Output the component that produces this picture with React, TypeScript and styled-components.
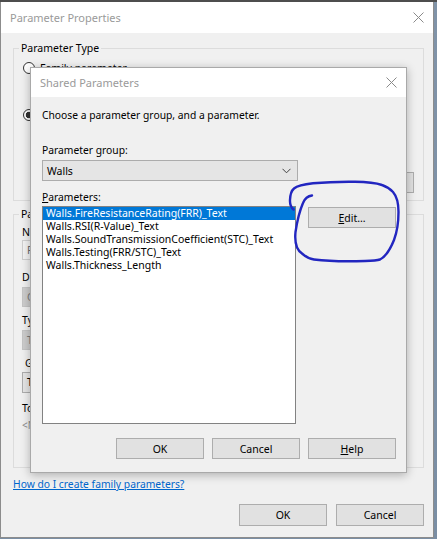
import React from 'react'
import styled, { createGlobalStyle } from 'styled-components'

const GlobalStyle = createGlobalStyle`
  html, body {
    margin: 0;
    padding: 0;
  }
  body {
    font-family: 'Noto Sans', 'Open Sans', sans-serif;
    font-size: 10px;
    color: #000;
  }
`

const parameters = [
  'Walls.FireResistanceRating(FRR)_Text',
  'Walls.RSI(R-Value)_Text',
  'Walls.SoundTransmissionCoefficient(STC)_Text',
  'Walls.Testing(FRR/STC)_Text',
  'Walls.Thickness_Length',
]

const CloseIcon: React.FC<{ size?: number }> = ({ size = 11 }) => (
  <svg width={size} height={size} viewBox="0 0 11 11">
    <path d="M0.5 0.5 L10.5 10.5 M10.5 0.5 L0.5 10.5" stroke="#8a8a8a" strokeWidth="1" fill="none" />
  </svg>
)

const Chevron = () => (
  <svg width="9" height="6" viewBox="0 0 9 6">
    <path d="M0.5 0.8 L4.5 4.8 L8.5 0.8" stroke="#404040" strokeWidth="1" fill="none" />
  </svg>
)

const App: React.FC = () => {
  return (
    <Desktop>
      <GlobalStyle />
      <Window>
        <TitleBar $h={31}>
          <TitleText>Parameter Properties</TitleText>
          <CloseIcon />
        </TitleBar>
        <WindowBody>
          <GroupBox>
            <Legend>Parameter Type</Legend>
            <GroupContent $h={145} $pl={4}>
              <RadioRow $mt={5}>
                <Radio />
                <span>Family parameter</span>
              </RadioRow>
              <RadioRow $mt={31}>
                <Radio $checked />
                <span>Shared parameter</span>
              </RadioRow>
              <ButtonRow $mt={49} $gap={8}>
                <Button $w={88} $h={21}>Select...</Button>
                <Button $w={88} $h={21}>Export...</Button>
              </ButtonRow>
            </GroupContent>
          </GroupBox>

          <GroupBox $mt={6}>
            <Legend>Parameter Data</Legend>
            <GroupContent $h={246} $pl={3}>
              <FieldLabel $mt={4}>Name:</FieldLabel>
              <TextBox $mt={1}>Fire Rating</TextBox>
              <FieldLabel $mt={10}>Discipline:</FieldLabel>
              <Combo $mt={3} $disabled>Common</Combo>
              <FieldLabel $mt={6}>Type of parameter:</FieldLabel>
              <Combo $mt={3} $disabled>Text</Combo>
              <FieldLabel $mt={6} $indent={3}>Group parameter under:</FieldLabel>
              <Combo $mt={2} $h={21}>Text</Combo>
              <FieldLabel $mt={8}>Tooltip description:</FieldLabel>
              <TooltipText>&lt;No tooltip description. Edit this parameter to write a custom tooltip.&gt;</TooltipText>
            </GroupContent>
          </GroupBox>

          <HelpLink href="#">How do I create family parameters?</HelpLink>

          <ButtonRow $mt={13} $gap={9}>
            <Button $w={88} $h={22}>OK</Button>
            <Button $w={88} $h={22}>Cancel</Button>
          </ButtonRow>
        </WindowBody>
      </Window>

      <Dialog>
        <TitleBar $h={29}>
          <TitleText>Shared Parameters</TitleText>
          <CloseIcon />
        </TitleBar>
        <DialogBody>
          <Text>Choose a parameter group, and a parameter.</Text>
          <Text $mt={21}>Parameter group:</Text>
          <GroupSelect>
            <span>Walls</span>
            <Chevron />
          </GroupSelect>
          <Text $mt={9}>
            <u>P</u>arameters:
          </Text>
          <ListRow>
            <ListBox>
              {parameters.map((name, i) => (
                <ListItem key={name} $selected={i === 0}>
                  {name}
                </ListItem>
              ))}
            </ListBox>
            <Button $w={88} $h={21} $mt={1}>
              <u>E</u>dit...
            </Button>
          </ListRow>
          <ButtonRow $mt={14} $gap={8}>
            <Button $w={88} $h={21}>OK</Button>
            <Button $w={88} $h={21}>Cancel</Button>
            <Button $w={88} $h={21}>
              <u>H</u>elp
            </Button>
          </ButtonRow>
        </DialogBody>
      </Dialog>

      <Annotation width="125" height="92" viewBox="280 175 125 92">
        <path
          d="M312 195.5 C308 196 305 198 303 203 C300 210 297 222 295.5 232 C294.5 242 297 250 302 253.5 C306 257 310 259 314 259.5 C330 261.5 350 261.5 365 261 C372 260.8 377 260.5 380 259.5 C385 257 390 250 394 240 C397 232 398.5 222 398.5 212 C398.5 203 396.5 196 393 192 C390 189 387 186.5 382 185 C376 183 368 182 355 181.8 C340 181.6 325 182.2 313 183.3 C303 184.4 297 186 294 188.5 C291 191 290.2 195 290 200 C289.8 204 290.5 207 293.5 209.5"
          fill="none"
          stroke="#2226c0"
          strokeWidth="2.4"
          strokeLinecap="round"
          strokeLinejoin="round"
        />
      </Annotation>
    </Desktop>
  )
}

export default App

const Desktop = styled.div`
  position: relative;
  width: 437px;
  height: 539px;
  box-sizing: border-box;
  padding-top: 2px;
  overflow: hidden;
  background: linear-gradient(to bottom, #4d4d4d 0, #4d4d4d 2px, #8093a8 2px, #7a8ea4 100%);
`

const Window = styled.div`
  width: 434px;
  height: 536px;
  box-sizing: border-box;
  border: 1px solid #8c8c8c;
  border-top: 0;
  background: #f0f0f0;
  display: flex;
  flex-direction: column;
`

const TitleBar = styled.div<{ $h: number }>`
  flex: none;
  height: ${(p) => p.$h}px;
  background: #fff;
  display: flex;
  align-items: center;
  justify-content: space-between;
  padding: 0 9px 0 9px;
`

const TitleText = styled.span`
  color: #9a9a9a;
  font-size: 11px;
`

const WindowBody = styled.div`
  flex: 1;
  display: flex;
  flex-direction: column;
  padding: 8px 9px 0 12px;
`

const GroupBox = styled.fieldset<{ $mt?: number }>`
  margin: ${(p) => p.$mt ?? 0}px 0 0 0;
  padding: 0 9px 0 5px;
  border: 1px solid #dcdcdc;
  min-width: 0;
`

const Legend = styled.legend`
  padding: 0 2px;
  line-height: 14px;
  font-size: 10.5px;
`

const GroupContent = styled.div<{ $h: number; $pl: number }>`
  height: ${(p) => p.$h}px;
  padding-left: ${(p) => p.$pl}px;
  display: flex;
  flex-direction: column;
  overflow: hidden;
`

const RadioRow = styled.label<{ $mt?: number }>`
  margin-top: ${(p) => p.$mt ?? 0}px;
  height: 16px;
  display: flex;
  align-items: center;
  gap: 5px;
  font-size: 10.5px;
`

const Radio = styled.span<{ $checked?: boolean }>`
  flex: none;
  width: 12px;
  height: 12px;
  box-sizing: border-box;
  border-radius: 50%;
  border: 1px solid #333;
  background: ${(p) =>
    p.$checked ? 'radial-gradient(circle, #333 0, #333 3px, #fff 3.6px)' : '#fff'};
`

const ButtonRow = styled.div<{ $mt?: number; $gap: number }>`
  margin-top: ${(p) => p.$mt ?? 0}px;
  display: flex;
  justify-content: flex-end;
  gap: ${(p) => p.$gap}px;
`

const Button = styled.button<{ $w: number; $h: number; $mt?: number }>`
  flex: none;
  width: ${(p) => p.$w}px;
  height: ${(p) => p.$h}px;
  margin: ${(p) => p.$mt ?? 0}px 0 0 0;
  padding: 0;
  box-sizing: border-box;
  background: #e1e1e1;
  border: 1px solid #adadad;
  border-radius: 0;
  font-family: inherit;
  font-size: 10.5px;
  color: #000;
  & u {
    text-underline-offset: 1px;
  }
`

const FieldLabel = styled.div<{ $mt?: number; $indent?: number }>`
  margin-top: ${(p) => p.$mt ?? 0}px;
  padding-left: ${(p) => p.$indent ?? 0}px;
  line-height: 14px;
  font-size: 10.5px;
  white-space: nowrap;
`

const TextBox = styled.div<{ $mt?: number }>`
  margin-top: ${(p) => p.$mt ?? 0}px;
  width: 250px;
  height: 20px;
  box-sizing: border-box;
  border: 1px solid #cfcfcf;
  background: #f3f3f3;
  color: #6d6d6d;
  padding-left: 4px;
  line-height: 18px;
  font-size: 10.5px;
`

const Combo = styled.div<{ $mt?: number; $h?: number; $disabled?: boolean }>`
  margin-top: ${(p) => p.$mt ?? 0}px;
  width: 250px;
  height: ${(p) => p.$h ?? 20}px;
  box-sizing: border-box;
  border: 1px solid ${(p) => (p.$disabled ? '#c4c4c4' : '#adadad')};
  background: ${(p) => (p.$disabled ? '#cccccc' : '#e5e5e5')};
  color: ${(p) => (p.$disabled ? '#7a7a7a' : '#000')};
  padding-left: 4px;
  line-height: ${(p) => (p.$h ?? 20) - 2}px;
  font-size: 10.5px;
`

const TooltipText = styled.div`
  margin-top: 3px;
  line-height: 14px;
  color: #8a8a8a;
  white-space: nowrap;
  overflow: hidden;
  max-width: 360px;
`

const HelpLink = styled.a`
  margin-top: 9px;
  line-height: 14px;
  color: #0066cc;
  text-decoration: underline;
  align-self: flex-start;
  font-size: 10.3px;
`

const Dialog = styled.div`
  position: absolute;
  left: 30px;
  top: 67px;
  width: 377px;
  height: 406px;
  box-sizing: border-box;
  border: 1px solid #a9a9a9;
  background: #f0f0f0;
  box-shadow: 0 2px 9px rgba(0, 0, 0, 0.28);
  display: flex;
  flex-direction: column;
`

const DialogBody = styled.div`
  flex: 1;
  display: flex;
  flex-direction: column;
  padding: 11px 10px 0 11px;
`

const Text = styled.div<{ $mt?: number }>`
  margin-top: ${(p) => p.$mt ?? 0}px;
  line-height: 14px;
  font-size: 10.3px;
  & u {
    text-underline-offset: 1px;
  }
`

const GroupSelect = styled.div`
  margin-top: 3px;
  width: 256px;
  height: 21px;
  box-sizing: border-box;
  border: 1px solid #acacac;
  background: #e5e5e5;
  display: flex;
  align-items: center;
  justify-content: space-between;
  padding: 0 6px 0 4px;
  font-size: 10.5px;
`

const ListRow = styled.div`
  margin-top: 2px;
  display: flex;
  align-items: flex-start;
  justify-content: space-between;
`

const ListBox = styled.div`
  width: 254px;
  height: 218px;
  box-sizing: border-box;
  border: 1px solid #828282;
  background: #fff;
  padding: 0;
  display: flex;
  flex-direction: column;
`

const ListItem = styled.div<{ $selected?: boolean }>`
  height: 13px;
  line-height: 13px;
  padding-left: 3px;
  font-size: 10.5px;
  white-space: nowrap;
  background: ${(p) => (p.$selected ? '#0078d7' : 'transparent')};
  color: ${(p) => (p.$selected ? '#fff' : '#000')};
`

const Annotation = styled.svg`
  position: absolute;
  left: 280px;
  top: 175px;
  pointer-events: none;
  overflow: visible;
`
